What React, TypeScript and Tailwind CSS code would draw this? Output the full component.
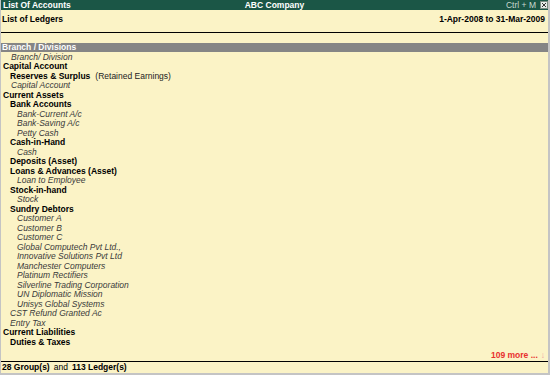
import React from "react";

type Row = { t: string; b?: boolean; i?: boolean; x: number; extra?: string };

const rows: Row[] = [
  { t: "Branch/ Division", i: true, x: 10 },
  { t: "Capital Account", b: true, x: 2 },
  { t: "Reserves & Surplus", b: true, x: 9, extra: "(Retained Earnings)" },
  { t: "Capital Account", i: true, x: 10 },
  { t: "Current Assets", b: true, x: 2 },
  { t: "Bank Accounts", b: true, x: 9 },
  { t: "Bank-Current A/c", i: true, x: 16 },
  { t: "Bank-Saving A/c", i: true, x: 16 },
  { t: "Petty Cash", i: true, x: 16 },
  { t: "Cash-in-Hand", b: true, x: 9 },
  { t: "Cash", i: true, x: 16 },
  { t: "Deposits (Asset)", b: true, x: 9 },
  { t: "Loans & Advances (Asset)", b: true, x: 9 },
  { t: "Loan to Employee", i: true, x: 16 },
  { t: "Stock-in-hand", b: true, x: 9 },
  { t: "Stock", i: true, x: 16 },
  { t: "Sundry Debtors", b: true, x: 9 },
  { t: "Customer A", i: true, x: 16 },
  { t: "Customer B", i: true, x: 16 },
  { t: "Customer C", i: true, x: 16 },
  { t: "Global Computech Pvt Ltd.,", i: true, x: 16 },
  { t: "Innovative Solutions Pvt Ltd", i: true, x: 16 },
  { t: "Manchester Computers", i: true, x: 16 },
  { t: "Platinum Rectifiers", i: true, x: 16 },
  { t: "Silverline Trading Corporation", i: true, x: 16 },
  { t: "UN Diplomatic Mission", i: true, x: 16 },
  { t: "Unisys Global Systems", i: true, x: 16 },
  { t: "CST Refund Granted Ac", i: true, x: 9 },
  { t: "Entry Tax", i: true, x: 9 },
  { t: "Current Liabilities", b: true, x: 2 },
  { t: "Duties & Taxes", b: true, x: 9 },
];

export default function App() {
  return (
    <div
      className="w-[550px] h-[375px] bg-[#fbf3c6] flex flex-col overflow-hidden text-[8.5px] text-black border-r-2 border-b-2 border-l border-[#c4c4c4]"
      style={{ fontFamily: '"Liberation Sans", Arial, sans-serif' }}
    >
      <div className="h-[10px] bg-[#1b5646] grid grid-cols-3 items-center leading-[10px] text-white font-bold shrink-0">
        <div className="pl-[2px]">List Of Accounts</div>
        <div className="text-center">ABC Company</div>
        <div className="flex justify-end items-center gap-[4px]">
          <span className="font-normal text-[#c9d9cf]">Ctrl + M</span>
          <span className="w-[8px] h-[8px] bg-[#e8ece8] border border-[#7a8a80] flex items-center justify-center">
            <svg width="6" height="6" viewBox="0 0 6 6">
              <path d="M1 1L5 5M5 1L1 5" stroke="#333" strokeWidth="1" />
            </svg>
          </span>
        </div>
      </div>
      <div className="h-[23px] shrink-0 flex justify-between items-start pt-[5px] px-[1px] leading-[9px] font-bold border-b border-black">
        <span>List of Ledgers</span>
        <span className="pr-[2px]">1-Apr-2008 to 31-Mar-2009</span>
      </div>
      <div className="h-[10px] shrink-0" />
      <div className="h-[9px] shrink-0 bg-[#858585] text-white font-bold leading-[9px] px-[1px]">
        Branch / Divisions
      </div>
      <div className="flex-1 flex flex-col pt-[0.5px]">
        {rows.map((r, idx) => (
          <div
            key={idx}
            className={
              "h-[9.5px] leading-[9.5px] whitespace-nowrap " +
              (r.b ? "font-bold text-black" : "") +
              (r.i ? " italic text-[#3a3a3a]" : "")
            }
            style={{ paddingLeft: r.x }}
          >
            {r.t}
            {r.extra && (
              <span className="font-normal text-[#222] ml-[5px]">{r.extra}</span>
            )}
          </div>
        ))}
      </div>
      <div className="h-[11px] shrink-0 flex justify-end items-center pr-[3px] font-bold text-[#e8302e] leading-[9px]">
        <span>109 more ...</span>
        <span className="ml-[3px] font-normal text-[#f0a0a0]">↓</span>
      </div>
      <div className="shrink-0 border-t border-black h-[1px] bg-[#b0aa90]" />
      <div className="h-[11px] shrink-0 flex items-center leading-[9px] px-[1px]">
        <span className="font-bold">28 Group(s)</span>
        <span className="mx-[4px]">and</span>
        <span className="font-bold">113 Ledger(s)</span>
      </div>
    </div>
  );
}
